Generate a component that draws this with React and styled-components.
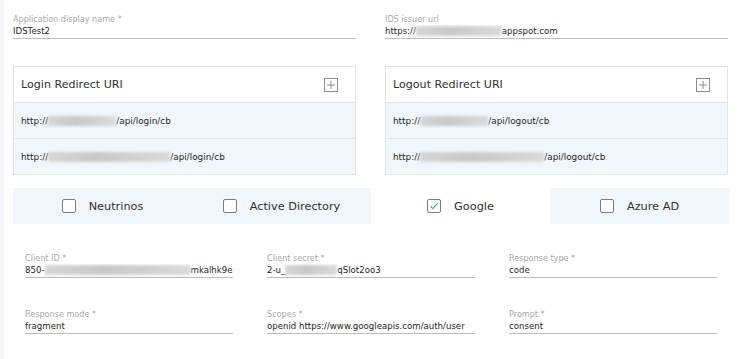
import React from 'react'
import styled, { createGlobalStyle } from 'styled-components'

const Global = createGlobalStyle`
  html, body { margin: 0; padding: 0; background: #f4f6f9; }
  body { font-family: "DejaVu Sans", "Liberation Sans", sans-serif; }
`

const Page = styled.div`
  width: 741px;
  height: 359px;
  overflow: hidden;
  padding-left: 4px;
  box-sizing: border-box;
`

const Card = styled.div`
  background: #fff;
  height: 100%;
  padding: 14px 12px 0 9px;
  box-sizing: border-box;
  display: flex;
  flex-direction: column;
`

const TwoCols = styled.div`
  display: grid;
  grid-template-columns: 343px 343px;
  column-gap: 29px;
`

const Field = styled.div`
  display: flex;
  flex-direction: column;
  min-width: 0;
`

const Label = styled.div`
  font-size: 8.1px;
  line-height: 11px;
  color: #a8a8a8;
  white-space: nowrap;
`

const Value = styled.div`
  font-size: 8.6px;
  line-height: 12px;
  color: #1e1e1e;
  white-space: nowrap;
  overflow: hidden;
  border-bottom: 1px solid #bdbdbd;
  padding-bottom: 1px;
  display: flex;
  align-items: center;
`

const Blur = styled.span`
  display: inline-block;
  flex: none;
  width: ${p => p.$w}px;
  height: 10px;
  background: linear-gradient(90deg, #d6d6d6, #c8c8c8 40%, #dadada);
  filter: blur(1.5px);
`

const Panels = styled(TwoCols)`
  margin-top: 27px;
`

const Panel = styled.div`
  border: 1px solid #e1e4e8;
  display: flex;
  flex-direction: column;
`

const PanelHead = styled.div`
  height: 35px;
  display: flex;
  align-items: center;
  justify-content: space-between;
  padding: 0 17px 0 7px;
  font-size: 11.1px;
  color: #2f2f2f;
  border-bottom: 1px solid #e1e4e8;
`

const PlusBox = styled.span`
  width: 14px;
  height: 14px;
  box-sizing: border-box;
  border: 1px solid #8c8c8c;
  display: flex;
  align-items: center;
  justify-content: center;
`

const UriRow = styled.div`
  height: 35px;
  background: #f1f6fd;
  display: flex;
  align-items: center;
  padding-left: 7px;
  font-size: 8.9px;
  color: #1e1e1e;
  white-space: nowrap;
  & + & { border-top: 1px solid #e1e4e8; }
`

const Tabs = styled.div`
  margin-top: 13px;
  display: grid;
  grid-template-columns: repeat(4, 1fr);
  height: 36px;
  background: #f1f6fd;
  width: 716px;
`

const Tab = styled.div`
  display: flex;
  align-items: center;
  justify-content: center;
  gap: 13px;
  background: ${p => (p.$active ? '#ffffff' : 'transparent')};
  font-size: 11.3px;
  color: #2f2f2f;
`

const Check = styled.span`
  width: 14px;
  height: 14px;
  box-sizing: border-box;
  border: 1px solid #7d7d7d;
  border-radius: 2px;
  background: #fff;
  display: flex;
  align-items: center;
  justify-content: center;
`

const Grid = styled.div`
  display: grid;
  grid-template-columns: repeat(3, 208px);
  column-gap: 34px;
  row-gap: 31px;
  padding: 29px 0 0 12px;
`

const Plus = () => (
  <PlusBox>
    <svg width="10" height="10" viewBox="0 0 10 10">
      <path d="M5 1v8M1 5h8" stroke="#8c8c8c" strokeWidth="1" fill="none" />
    </svg>
  </PlusBox>
)

const Box = ({ on }) => (
  <Check>
    {on && (
      <svg width="10" height="10" viewBox="0 0 10 10">
        <path d="M1.5 5.2l2.4 2.4 4.8-5.4" stroke="#3fb950" strokeWidth="1.1" fill="none" />
      </svg>
    )}
  </Check>
)

const uris = {
  login: [
    ['http://', 68, '/api/login/cb'],
    ['http://', 122, '/api/login/cb'],
  ],
  logout: [
    ['http://', 68, '/api/logout/cb'],
    ['http://', 124, '/api/logout/cb'],
  ],
}

const providers = [
  { name: 'Neutrinos' },
  { name: 'Active Directory' },
  { name: 'Google', active: true },
  { name: 'Azure AD' },
]

const fields = [
  { label: 'Client ID *', pre: '850-', blur: 146, post: 'mkalhk9e' },
  { label: 'Client secret *', pre: '2-u_', blur: 52, post: 'qSlot2oo3' },
  { label: 'Response type *', post: 'code' },
  { label: 'Response mode *', post: 'fragment' },
  { label: 'Scopes *', post: 'openid https://www.googleapis.com/auth/user' },
  { label: 'Prompt *', post: 'consent' },
]

function UriPanel({ title, rows }) {
  return (
    <Panel>
      <PanelHead>
        {title}
        <Plus />
      </PanelHead>
      {rows.map((r, i) => (
        <UriRow key={i}>
          {r[0]}
          <Blur $w={r[1]} />
          {r[2]}
        </UriRow>
      ))}
    </Panel>
  )
}

export default function App() {
  return (
    <Page>
      <Global />
      <Card>
        <TwoCols>
          <Field>
            <Label>Application display name *</Label>
            <Value>IDSTest2</Value>
          </Field>
          <Field>
            <Label>IDS issuer url</Label>
            <Value>
              https://
              <Blur $w={86} />
              appspot.com
            </Value>
          </Field>
        </TwoCols>

        <Panels>
          <UriPanel title="Login Redirect URI" rows={uris.login} />
          <UriPanel title="Logout Redirect URI" rows={uris.logout} />
        </Panels>

        <Tabs>
          {providers.map(p => (
            <Tab key={p.name} $active={p.active}>
              <Box on={p.active} />
              {p.name}
            </Tab>
          ))}
        </Tabs>

        <Grid>
          {fields.map(f => (
            <Field key={f.label}>
              <Label>{f.label}</Label>
              <Value>
                {f.pre}
                {f.blur && <Blur $w={f.blur} />}
                {f.post}
              </Value>
            </Field>
          ))}
        </Grid>
      </Card>
    </Page>
  )
}
